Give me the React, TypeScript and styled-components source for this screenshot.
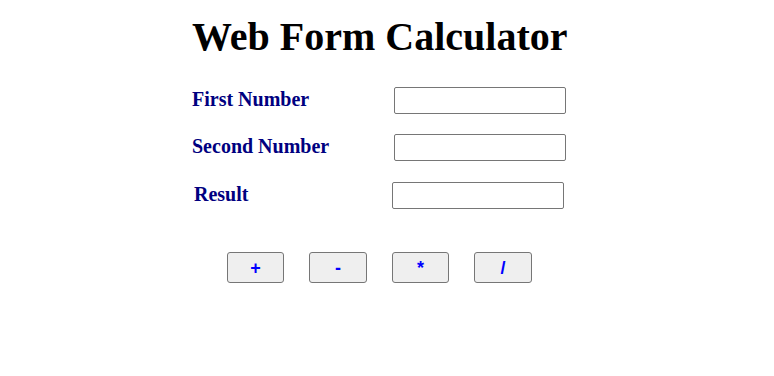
import React from "react";
import styled, { createGlobalStyle } from "styled-components";

const Global = createGlobalStyle`
  html, body { margin: 0; padding: 0; background: #ffffff; }
  body { font-family: "Liberation Serif", "Times New Roman", serif; }
`;

const Page = styled.div`
  width: 375px;
  margin-left: 192px;
  padding-top: 14px;
  display: flex;
  flex-direction: column;
`;

const Title = styled.h1`
  margin: 0;
  font-family: "Liberation Serif", "Times New Roman", serif;
  font-size: 40px;
  line-height: 46px;
  font-weight: bold;
  color: #000000;
  white-space: nowrap;
`;

const Form = styled.div`
  margin-top: 27px;
  display: flex;
  flex-direction: column;
  gap: 20px;
`;

const Row = styled.div<{ $extraTop?: number }>`
  display: grid;
  grid-template-columns: 202px 172px;
  align-items: start;
  margin-top: ${(p) => p.$extraTop ?? 0}px;
`;

const Label = styled.label<{ $shift?: number }>`
  font-family: "Liberation Serif", "Times New Roman", serif;
  font-size: 20px;
  line-height: 24px;
  font-weight: bold;
  color: #000080;
  white-space: nowrap;
  margin-left: ${(p) => p.$shift ?? 0}px;
`;

const Field = styled.input<{ $shift?: number }>`
  box-sizing: border-box;
  width: 172px;
  height: 27px;
  margin: 0 0 0 ${(p) => p.$shift ?? 0}px;
  padding: 1px 2px;
  border: 1px solid #767676;
  border-radius: 2px;
  background: #ffffff;
  font-family: "Liberation Sans", Arial, sans-serif;
  font-size: 13px;
  outline: none;
`;

const Buttons = styled.div`
  margin-top: 43px;
  display: flex;
  justify-content: flex-start;
  gap: 25px;
  padding-left: 35px;
`;

const OpButton = styled.button<{ $wide?: boolean }>`
  box-sizing: border-box;
  width: ${(p) => (p.$wide ? 58 : 57)}px;
  height: 31px;
  padding: 0;
  border: 1px solid #767676;
  border-radius: 3px;
  background: #efefef;
  color: #0000ff;
  font-family: "Liberation Sans", Arial, sans-serif;
  font-size: 18px;
  font-weight: bold;
  line-height: 1;
  cursor: pointer;
`;

export default function App() {
  return (
    <>
      <Global />
      <Page>
        <Title>Web Form Calculator</Title>
        <Form>
          <Row>
            <Label>First Number</Label>
            <Field type="text" />
          </Row>
          <Row>
            <Label>Second Number</Label>
            <Field type="text" />
          </Row>
          <Row $extraTop={1}>
            <Label $shift={2}>Result</Label>
            <Field type="text" $shift={-2} />
          </Row>
        </Form>
        <Buttons>
          <OpButton>+</OpButton>
          <OpButton $wide>-</OpButton>
          <OpButton>*</OpButton>
          <OpButton $wide>/</OpButton>
        </Buttons>
      </Page>
    </>
  );
}
